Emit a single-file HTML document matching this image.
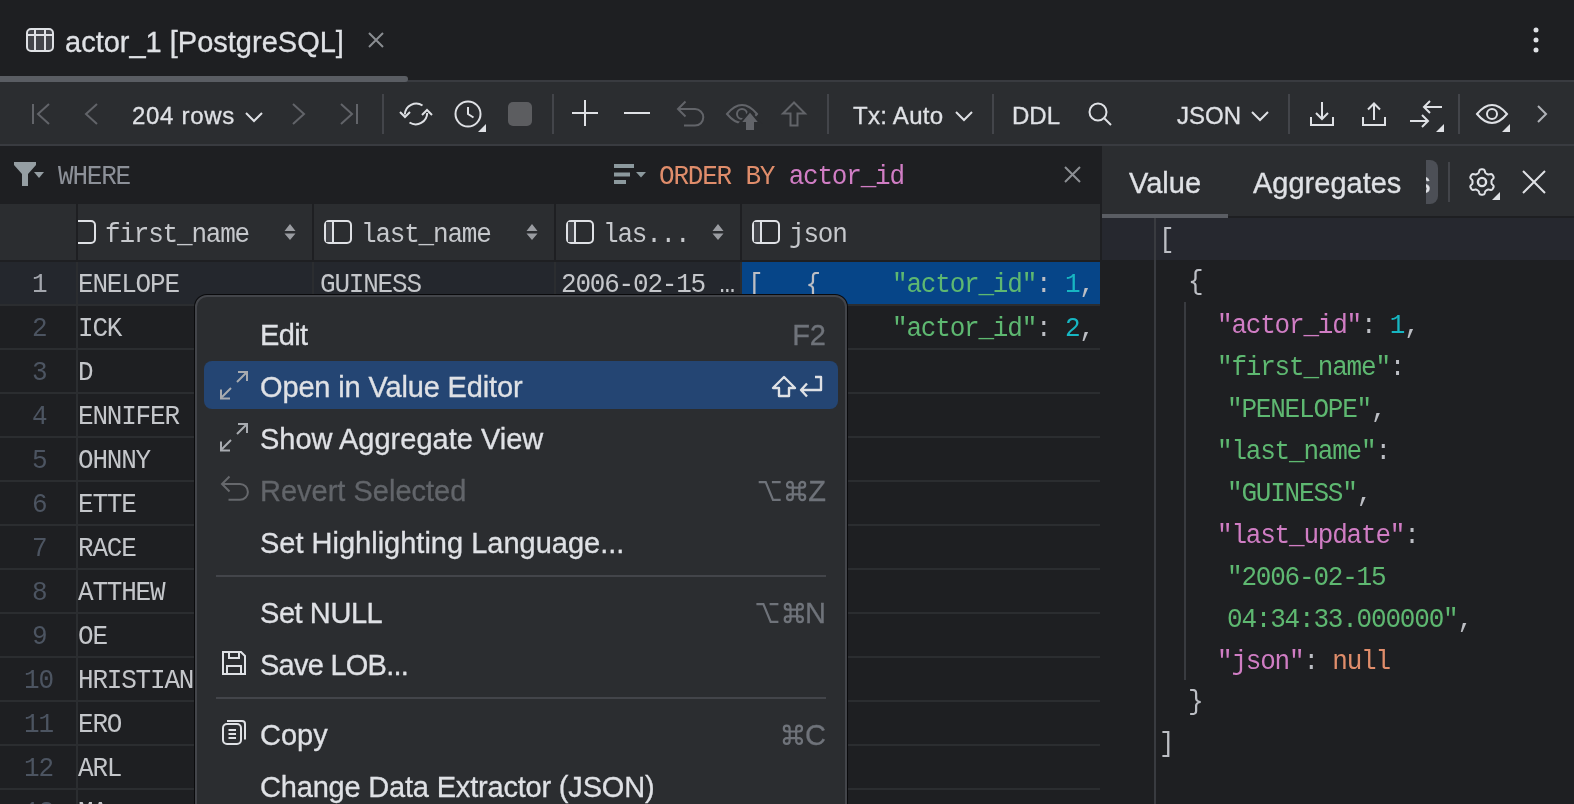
<!DOCTYPE html>
<html><head><meta charset="utf-8"><style>
html,body{margin:0;padding:0;width:1574px;height:804px;overflow:hidden;background:#1E1F22}
body>*{position:absolute}
.t{white-space:pre;line-height:0;height:0;-webkit-text-stroke:0.3px;will-change:transform}
</style></head><body>
<div style="left:0px;top:0px;width:1574px;height:80px;background:#1E1F22;"></div>
<div class="t" style="left:65px;top:25.75px;font:29px 'Liberation Sans', sans-serif;color:#DFE1E5;">actor_1 [PostgreSQL]</div>
<div style="left:0px;top:80px;width:1574px;height:2px;background:#393B40;"></div>
<div style="left:0px;top:76px;width:408px;height:6px;background:#5A5D63;border-radius:0 3px 3px 0"></div>
<div style="left:0px;top:82px;width:1574px;height:62px;background:#2B2D30;"></div>
<div style="left:0px;top:144px;width:1574px;height:2px;background:#393B40;"></div>
<div class="t" style="left:132px;top:102.27px;font:24px 'Liberation Sans', sans-serif;color:#DFE1E5;letter-spacing:0.7px">204 rows</div>
<div class="t" style="left:852.5px;top:101.77px;font:24px 'Liberation Sans', sans-serif;color:#DFE1E5;letter-spacing:0.3px">Tx: Auto</div>
<div class="t" style="left:1012px;top:101.77px;font:24px 'Liberation Sans', sans-serif;color:#DFE1E5;">DDL</div>
<div class="t" style="left:1176.5px;top:101.77px;font:24px 'Liberation Sans', sans-serif;color:#DFE1E5;">JSON</div>
<div style="left:0px;top:146px;width:1100px;height:58px;background:#1E1F22;"></div>
<div class="t" style="left:58px;top:162.35px;font:26px 'Liberation Mono', monospace;color:#8C9098;-webkit-text-stroke:0px;transform:scaleY(1.06);transform-origin:0 21.64px;letter-spacing:-1.2px">WHERE</div>
<div class="t" style="left:659px;top:162.35px;font:26px 'Liberation Mono', monospace;color:#E08D6B;-webkit-text-stroke:0px;transform:scaleY(1.06);transform-origin:0 21.64px;letter-spacing:-1.2px"><span style="color:#E08D6B">ORDER BY</span> <span style="color:#D07DC4">actor_id</span></div>
<div style="left:1100px;top:146px;width:2px;height:658px;background:#1E1F22;"></div>
<div style="left:0px;top:204px;width:1100px;height:56px;background:#2B2D30;"></div>
<div style="left:0px;top:260px;width:1100px;height:2px;background:#1E1F22;"></div>
<div style="left:76px;top:204px;width:2px;height:56px;background:#1E1F22;"></div>
<div style="left:312px;top:204px;width:2px;height:56px;background:#1E1F22;"></div>
<div style="left:554px;top:204px;width:2px;height:56px;background:#1E1F22;"></div>
<div style="left:740px;top:204px;width:2px;height:56px;background:#1E1F22;"></div>
<div class="t" style="left:105px;top:220.35px;font:26px 'Liberation Mono', monospace;color:#C6C8CC;-webkit-text-stroke:0px;transform:scaleY(1.06);transform-origin:0 21.64px;letter-spacing:-1.2px">first_name</div>
<div class="t" style="left:361px;top:220.35px;font:26px 'Liberation Mono', monospace;color:#C6C8CC;-webkit-text-stroke:0px;transform:scaleY(1.06);transform-origin:0 21.64px;letter-spacing:-1.2px">last_name</div>
<div class="t" style="left:603px;top:220.35px;font:26px 'Liberation Mono', monospace;color:#C6C8CC;-webkit-text-stroke:0px;transform:scaleY(1.06);transform-origin:0 21.64px;letter-spacing:-1.2px">las...</div>
<div class="t" style="left:789px;top:220.35px;font:26px 'Liberation Mono', monospace;color:#C6C8CC;-webkit-text-stroke:0px;transform:scaleY(1.06);transform-origin:0 21.64px;letter-spacing:-1.2px">json</div>
<div style="left:0px;top:262px;width:1100px;height:42px;background:#24272D;"></div>
<div style="left:0px;top:304px;width:1100px;height:2px;background:#2B2D30;"></div>
<div style="left:76px;top:262px;width:2px;height:44px;background:#2B2D30;"></div>
<div style="left:742px;top:262px;width:358px;height:42px;background:#064588;"></div>
<div class="t" style="left:32px;top:270.36px;font:26px 'Liberation Mono', monospace;color:#A3A6AD;-webkit-text-stroke:0px;transform:scaleY(1.06);transform-origin:0 21.64px;letter-spacing:-1.2px">1</div>
<div class="t" style="left:78px;top:270.36px;font:26px 'Liberation Mono', monospace;color:#C4C6CA;-webkit-text-stroke:0px;transform:scaleY(1.06);transform-origin:0 21.64px;letter-spacing:-1.2px">ENELOPE</div>
<div class="t" style="left:320px;top:270.36px;font:26px 'Liberation Mono', monospace;color:#C4C6CA;-webkit-text-stroke:0px;transform:scaleY(1.06);transform-origin:0 21.64px;letter-spacing:-1.2px">GUINESS</div>
<div class="t" style="left:561px;top:270.36px;font:26px 'Liberation Mono', monospace;color:#C4C6CA;-webkit-text-stroke:0px;transform:scaleY(1.06);transform-origin:0 21.64px;letter-spacing:-1.2px">2006-02-15 …</div>
<div class="t" style="left:747.5px;top:270.36px;font:26px 'Liberation Mono', monospace;color:#BCBEC4;-webkit-text-stroke:0px;transform:scaleY(1.06);transform-origin:0 21.64px;letter-spacing:-1.2px"><span style="color:#BCBEC4">[   {     </span><span style="color:#5EB871">"actor_id"</span><span style="color:#BCBEC4">: </span><span style="color:#17B6C2">1</span><span style="color:#BCBEC4">,</span></div>
<div style="left:312px;top:262px;width:2px;height:44px;background:#2B2D30;"></div>
<div style="left:554px;top:262px;width:2px;height:44px;background:#2B2D30;"></div>
<div style="left:740px;top:262px;width:2px;height:44px;background:#2B2D30;"></div>
<div style="left:0px;top:306px;width:1100px;height:42px;background:#1E1F22;"></div>
<div style="left:0px;top:348px;width:1100px;height:2px;background:#2B2D30;"></div>
<div style="left:76px;top:306px;width:2px;height:44px;background:#2B2D30;"></div>
<div class="t" style="left:32px;top:314.36px;font:26px 'Liberation Mono', monospace;color:#4C5461;-webkit-text-stroke:0px;transform:scaleY(1.06);transform-origin:0 21.64px;letter-spacing:-1.2px">2</div>
<div class="t" style="left:78px;top:314.36px;font:26px 'Liberation Mono', monospace;color:#C4C6CA;-webkit-text-stroke:0px;transform:scaleY(1.06);transform-origin:0 21.64px;letter-spacing:-1.2px">ICK</div>
<div class="t" style="left:747.5px;top:314.36px;font:26px 'Liberation Mono', monospace;color:#BCBEC4;-webkit-text-stroke:0px;transform:scaleY(1.06);transform-origin:0 21.64px;letter-spacing:-1.2px"><span style="color:#BCBEC4">[   {     </span><span style="color:#5EB871">"actor_id"</span><span style="color:#BCBEC4">: </span><span style="color:#17B6C2">2</span><span style="color:#BCBEC4">,</span></div>
<div style="left:312px;top:306px;width:2px;height:44px;background:#2B2D30;"></div>
<div style="left:554px;top:306px;width:2px;height:44px;background:#2B2D30;"></div>
<div style="left:740px;top:306px;width:2px;height:44px;background:#2B2D30;"></div>
<div style="left:0px;top:350px;width:1100px;height:42px;background:#1E1F22;"></div>
<div style="left:0px;top:392px;width:1100px;height:2px;background:#2B2D30;"></div>
<div style="left:76px;top:350px;width:2px;height:44px;background:#2B2D30;"></div>
<div class="t" style="left:32px;top:358.36px;font:26px 'Liberation Mono', monospace;color:#4C5461;-webkit-text-stroke:0px;transform:scaleY(1.06);transform-origin:0 21.64px;letter-spacing:-1.2px">3</div>
<div class="t" style="left:78px;top:358.36px;font:26px 'Liberation Mono', monospace;color:#C4C6CA;-webkit-text-stroke:0px;transform:scaleY(1.06);transform-origin:0 21.64px;letter-spacing:-1.2px">D</div>
<div style="left:312px;top:350px;width:2px;height:44px;background:#2B2D30;"></div>
<div style="left:554px;top:350px;width:2px;height:44px;background:#2B2D30;"></div>
<div style="left:740px;top:350px;width:2px;height:44px;background:#2B2D30;"></div>
<div style="left:0px;top:394px;width:1100px;height:42px;background:#1E1F22;"></div>
<div style="left:0px;top:436px;width:1100px;height:2px;background:#2B2D30;"></div>
<div style="left:76px;top:394px;width:2px;height:44px;background:#2B2D30;"></div>
<div class="t" style="left:32px;top:402.36px;font:26px 'Liberation Mono', monospace;color:#4C5461;-webkit-text-stroke:0px;transform:scaleY(1.06);transform-origin:0 21.64px;letter-spacing:-1.2px">4</div>
<div class="t" style="left:78px;top:402.36px;font:26px 'Liberation Mono', monospace;color:#C4C6CA;-webkit-text-stroke:0px;transform:scaleY(1.06);transform-origin:0 21.64px;letter-spacing:-1.2px">ENNIFER</div>
<div style="left:312px;top:394px;width:2px;height:44px;background:#2B2D30;"></div>
<div style="left:554px;top:394px;width:2px;height:44px;background:#2B2D30;"></div>
<div style="left:740px;top:394px;width:2px;height:44px;background:#2B2D30;"></div>
<div style="left:0px;top:438px;width:1100px;height:42px;background:#1E1F22;"></div>
<div style="left:0px;top:480px;width:1100px;height:2px;background:#2B2D30;"></div>
<div style="left:76px;top:438px;width:2px;height:44px;background:#2B2D30;"></div>
<div class="t" style="left:32px;top:446.36px;font:26px 'Liberation Mono', monospace;color:#4C5461;-webkit-text-stroke:0px;transform:scaleY(1.06);transform-origin:0 21.64px;letter-spacing:-1.2px">5</div>
<div class="t" style="left:78px;top:446.36px;font:26px 'Liberation Mono', monospace;color:#C4C6CA;-webkit-text-stroke:0px;transform:scaleY(1.06);transform-origin:0 21.64px;letter-spacing:-1.2px">OHNNY</div>
<div style="left:312px;top:438px;width:2px;height:44px;background:#2B2D30;"></div>
<div style="left:554px;top:438px;width:2px;height:44px;background:#2B2D30;"></div>
<div style="left:740px;top:438px;width:2px;height:44px;background:#2B2D30;"></div>
<div style="left:0px;top:482px;width:1100px;height:42px;background:#1E1F22;"></div>
<div style="left:0px;top:524px;width:1100px;height:2px;background:#2B2D30;"></div>
<div style="left:76px;top:482px;width:2px;height:44px;background:#2B2D30;"></div>
<div class="t" style="left:32px;top:490.36px;font:26px 'Liberation Mono', monospace;color:#4C5461;-webkit-text-stroke:0px;transform:scaleY(1.06);transform-origin:0 21.64px;letter-spacing:-1.2px">6</div>
<div class="t" style="left:78px;top:490.36px;font:26px 'Liberation Mono', monospace;color:#C4C6CA;-webkit-text-stroke:0px;transform:scaleY(1.06);transform-origin:0 21.64px;letter-spacing:-1.2px">ETTE</div>
<div style="left:312px;top:482px;width:2px;height:44px;background:#2B2D30;"></div>
<div style="left:554px;top:482px;width:2px;height:44px;background:#2B2D30;"></div>
<div style="left:740px;top:482px;width:2px;height:44px;background:#2B2D30;"></div>
<div style="left:0px;top:526px;width:1100px;height:42px;background:#1E1F22;"></div>
<div style="left:0px;top:568px;width:1100px;height:2px;background:#2B2D30;"></div>
<div style="left:76px;top:526px;width:2px;height:44px;background:#2B2D30;"></div>
<div class="t" style="left:32px;top:534.36px;font:26px 'Liberation Mono', monospace;color:#4C5461;-webkit-text-stroke:0px;transform:scaleY(1.06);transform-origin:0 21.64px;letter-spacing:-1.2px">7</div>
<div class="t" style="left:78px;top:534.36px;font:26px 'Liberation Mono', monospace;color:#C4C6CA;-webkit-text-stroke:0px;transform:scaleY(1.06);transform-origin:0 21.64px;letter-spacing:-1.2px">RACE</div>
<div style="left:312px;top:526px;width:2px;height:44px;background:#2B2D30;"></div>
<div style="left:554px;top:526px;width:2px;height:44px;background:#2B2D30;"></div>
<div style="left:740px;top:526px;width:2px;height:44px;background:#2B2D30;"></div>
<div style="left:0px;top:570px;width:1100px;height:42px;background:#1E1F22;"></div>
<div style="left:0px;top:612px;width:1100px;height:2px;background:#2B2D30;"></div>
<div style="left:76px;top:570px;width:2px;height:44px;background:#2B2D30;"></div>
<div class="t" style="left:32px;top:578.36px;font:26px 'Liberation Mono', monospace;color:#4C5461;-webkit-text-stroke:0px;transform:scaleY(1.06);transform-origin:0 21.64px;letter-spacing:-1.2px">8</div>
<div class="t" style="left:78px;top:578.36px;font:26px 'Liberation Mono', monospace;color:#C4C6CA;-webkit-text-stroke:0px;transform:scaleY(1.06);transform-origin:0 21.64px;letter-spacing:-1.2px">ATTHEW</div>
<div style="left:312px;top:570px;width:2px;height:44px;background:#2B2D30;"></div>
<div style="left:554px;top:570px;width:2px;height:44px;background:#2B2D30;"></div>
<div style="left:740px;top:570px;width:2px;height:44px;background:#2B2D30;"></div>
<div style="left:0px;top:614px;width:1100px;height:42px;background:#1E1F22;"></div>
<div style="left:0px;top:656px;width:1100px;height:2px;background:#2B2D30;"></div>
<div style="left:76px;top:614px;width:2px;height:44px;background:#2B2D30;"></div>
<div class="t" style="left:32px;top:622.36px;font:26px 'Liberation Mono', monospace;color:#4C5461;-webkit-text-stroke:0px;transform:scaleY(1.06);transform-origin:0 21.64px;letter-spacing:-1.2px">9</div>
<div class="t" style="left:78px;top:622.36px;font:26px 'Liberation Mono', monospace;color:#C4C6CA;-webkit-text-stroke:0px;transform:scaleY(1.06);transform-origin:0 21.64px;letter-spacing:-1.2px">OE</div>
<div style="left:312px;top:614px;width:2px;height:44px;background:#2B2D30;"></div>
<div style="left:554px;top:614px;width:2px;height:44px;background:#2B2D30;"></div>
<div style="left:740px;top:614px;width:2px;height:44px;background:#2B2D30;"></div>
<div style="left:0px;top:658px;width:1100px;height:42px;background:#1E1F22;"></div>
<div style="left:0px;top:700px;width:1100px;height:2px;background:#2B2D30;"></div>
<div style="left:76px;top:658px;width:2px;height:44px;background:#2B2D30;"></div>
<div class="t" style="left:24px;top:666.36px;font:26px 'Liberation Mono', monospace;color:#4C5461;-webkit-text-stroke:0px;transform:scaleY(1.06);transform-origin:0 21.64px;letter-spacing:-1.2px">10</div>
<div class="t" style="left:78px;top:666.36px;font:26px 'Liberation Mono', monospace;color:#C4C6CA;-webkit-text-stroke:0px;transform:scaleY(1.06);transform-origin:0 21.64px;letter-spacing:-1.2px">HRISTIAN</div>
<div style="left:312px;top:658px;width:2px;height:44px;background:#2B2D30;"></div>
<div style="left:554px;top:658px;width:2px;height:44px;background:#2B2D30;"></div>
<div style="left:740px;top:658px;width:2px;height:44px;background:#2B2D30;"></div>
<div style="left:0px;top:702px;width:1100px;height:42px;background:#1E1F22;"></div>
<div style="left:0px;top:744px;width:1100px;height:2px;background:#2B2D30;"></div>
<div style="left:76px;top:702px;width:2px;height:44px;background:#2B2D30;"></div>
<div class="t" style="left:24px;top:710.36px;font:26px 'Liberation Mono', monospace;color:#4C5461;-webkit-text-stroke:0px;transform:scaleY(1.06);transform-origin:0 21.64px;letter-spacing:-1.2px">11</div>
<div class="t" style="left:78px;top:710.36px;font:26px 'Liberation Mono', monospace;color:#C4C6CA;-webkit-text-stroke:0px;transform:scaleY(1.06);transform-origin:0 21.64px;letter-spacing:-1.2px">ERO</div>
<div style="left:312px;top:702px;width:2px;height:44px;background:#2B2D30;"></div>
<div style="left:554px;top:702px;width:2px;height:44px;background:#2B2D30;"></div>
<div style="left:740px;top:702px;width:2px;height:44px;background:#2B2D30;"></div>
<div style="left:0px;top:746px;width:1100px;height:42px;background:#1E1F22;"></div>
<div style="left:0px;top:788px;width:1100px;height:2px;background:#2B2D30;"></div>
<div style="left:76px;top:746px;width:2px;height:44px;background:#2B2D30;"></div>
<div class="t" style="left:24px;top:754.36px;font:26px 'Liberation Mono', monospace;color:#4C5461;-webkit-text-stroke:0px;transform:scaleY(1.06);transform-origin:0 21.64px;letter-spacing:-1.2px">12</div>
<div class="t" style="left:78px;top:754.36px;font:26px 'Liberation Mono', monospace;color:#C4C6CA;-webkit-text-stroke:0px;transform:scaleY(1.06);transform-origin:0 21.64px;letter-spacing:-1.2px">ARL</div>
<div style="left:312px;top:746px;width:2px;height:44px;background:#2B2D30;"></div>
<div style="left:554px;top:746px;width:2px;height:44px;background:#2B2D30;"></div>
<div style="left:740px;top:746px;width:2px;height:44px;background:#2B2D30;"></div>
<div style="left:0px;top:790px;width:1100px;height:42px;background:#1E1F22;"></div>
<div style="left:0px;top:832px;width:1100px;height:2px;background:#2B2D30;"></div>
<div style="left:76px;top:790px;width:2px;height:44px;background:#2B2D30;"></div>
<div class="t" style="left:24px;top:798.36px;font:26px 'Liberation Mono', monospace;color:#4C5461;-webkit-text-stroke:0px;transform:scaleY(1.06);transform-origin:0 21.64px;letter-spacing:-1.2px">13</div>
<div class="t" style="left:78px;top:798.36px;font:26px 'Liberation Mono', monospace;color:#C4C6CA;-webkit-text-stroke:0px;transform:scaleY(1.06);transform-origin:0 21.64px;letter-spacing:-1.2px">MA</div>
<div style="left:312px;top:790px;width:2px;height:44px;background:#2B2D30;"></div>
<div style="left:554px;top:790px;width:2px;height:44px;background:#2B2D30;"></div>
<div style="left:740px;top:790px;width:2px;height:44px;background:#2B2D30;"></div>
<div style="left:1102px;top:146px;width:472px;height:70px;background:#2B2D30;"></div>
<div style="left:1102px;top:216px;width:472px;height:2px;background:#1E1F22;"></div>
<div style="left:1102px;top:214px;width:126px;height:4px;background:#5A5D63;"></div>
<div class="t" style="left:1128.5px;top:167.25px;font:29px 'Liberation Sans', sans-serif;color:#DFE1E5;">Value</div>
<div class="t" style="left:1253px;top:167.25px;font:29px 'Liberation Sans', sans-serif;color:#DFE1E5;">Aggregates</div>
<div style="left:1426px;top:160px;width:12px;height:44px;background:#4C4F56;border-radius:0 8px 8px 0;overflow:hidden"><div class="t" style="left:-10px;top:7.25px;position:absolute;font:29px 'Liberation Sans', sans-serif;color:#DFE1E5">s</div></div>
<div style="left:1102px;top:218px;width:472px;height:586px;background:#1E1F22;"></div>
<div style="left:1102px;top:218px;width:472px;height:42px;background:#26282F;"></div>
<div style="left:1154px;top:218px;width:2px;height:586px;background:#393B40;"></div>
<div style="left:1184px;top:302px;width:2px;height:378px;background:#393B40;"></div>
<div class="t" style="left:1159px;top:224.85px;font:26px 'Liberation Mono', monospace;color:#BCBEC4;-webkit-text-stroke:0px;transform:scaleY(1.06);transform-origin:0 21.64px;letter-spacing:-1.2px"><span style="color:#BCBEC4">[</span></div>
<div class="t" style="left:1188px;top:266.86px;font:26px 'Liberation Mono', monospace;color:#BCBEC4;-webkit-text-stroke:0px;transform:scaleY(1.06);transform-origin:0 21.64px;letter-spacing:-1.2px"><span style="color:#BCBEC4">{</span></div>
<div class="t" style="left:1217px;top:310.86px;font:26px 'Liberation Mono', monospace;color:#BCBEC4;-webkit-text-stroke:0px;transform:scaleY(1.06);transform-origin:0 21.64px;letter-spacing:-1.2px"><span style="color:#D07DC4">"actor_id"</span><span style="color:#BCBEC4">: </span><span style="color:#17B6C2">1</span><span style="color:#BCBEC4">,</span></div>
<div class="t" style="left:1217px;top:352.86px;font:26px 'Liberation Mono', monospace;color:#BCBEC4;-webkit-text-stroke:0px;transform:scaleY(1.06);transform-origin:0 21.64px;letter-spacing:-1.2px"><span style="color:#5EB871">"first_name"</span><span style="color:#BCBEC4">:</span></div>
<div class="t" style="left:1227px;top:394.86px;font:26px 'Liberation Mono', monospace;color:#BCBEC4;-webkit-text-stroke:0px;transform:scaleY(1.06);transform-origin:0 21.64px;letter-spacing:-1.2px"><span style="color:#5EB871">"PENELOPE"</span><span style="color:#BCBEC4">,</span></div>
<div class="t" style="left:1217px;top:436.86px;font:26px 'Liberation Mono', monospace;color:#BCBEC4;-webkit-text-stroke:0px;transform:scaleY(1.06);transform-origin:0 21.64px;letter-spacing:-1.2px"><span style="color:#5EB871">"last_name"</span><span style="color:#BCBEC4">:</span></div>
<div class="t" style="left:1227px;top:478.86px;font:26px 'Liberation Mono', monospace;color:#BCBEC4;-webkit-text-stroke:0px;transform:scaleY(1.06);transform-origin:0 21.64px;letter-spacing:-1.2px"><span style="color:#5EB871">"GUINESS"</span><span style="color:#BCBEC4">,</span></div>
<div class="t" style="left:1217px;top:520.86px;font:26px 'Liberation Mono', monospace;color:#BCBEC4;-webkit-text-stroke:0px;transform:scaleY(1.06);transform-origin:0 21.64px;letter-spacing:-1.2px"><span style="color:#D07DC4">"last_update"</span><span style="color:#BCBEC4">:</span></div>
<div class="t" style="left:1227px;top:562.86px;font:26px 'Liberation Mono', monospace;color:#BCBEC4;-webkit-text-stroke:0px;transform:scaleY(1.06);transform-origin:0 21.64px;letter-spacing:-1.2px"><span style="color:#5EB871">"2006-02-15</span></div>
<div class="t" style="left:1227px;top:604.86px;font:26px 'Liberation Mono', monospace;color:#BCBEC4;-webkit-text-stroke:0px;transform:scaleY(1.06);transform-origin:0 21.64px;letter-spacing:-1.2px"><span style="color:#5EB871">04:34:33.000000"</span><span style="color:#BCBEC4">,</span></div>
<div class="t" style="left:1217px;top:646.86px;font:26px 'Liberation Mono', monospace;color:#BCBEC4;-webkit-text-stroke:0px;transform:scaleY(1.06);transform-origin:0 21.64px;letter-spacing:-1.2px"><span style="color:#D07DC4">"json"</span><span style="color:#BCBEC4">: </span><span style="color:#E08D6B">null</span></div>
<div class="t" style="left:1188px;top:686.86px;font:26px 'Liberation Mono', monospace;color:#BCBEC4;-webkit-text-stroke:0px;transform:scaleY(1.06);transform-origin:0 21.64px;letter-spacing:-1.2px"><span style="color:#BCBEC4">}</span></div>
<div class="t" style="left:1159px;top:728.86px;font:26px 'Liberation Mono', monospace;color:#BCBEC4;-webkit-text-stroke:0px;transform:scaleY(1.06);transform-origin:0 21.64px;letter-spacing:-1.2px"><span style="color:#BCBEC4">]</span></div>
<svg style="left:0;top:0" width="1574" height="804"><rect x="27" y="29" width="26" height="22" rx="4" fill="#43454A" stroke="#DFE1E5" stroke-width="2"/><path d="M27 35H53M35 29V51M45 29V51" stroke="#DFE1E5" stroke-width="2"/><path d="M369 33L383 47M383 33L369 47" stroke="#8A8D92" stroke-width="2"/><circle cx="1536" cy="30" r="2.5" fill="#DFE1E5"/><circle cx="1536" cy="40" r="2.5" fill="#DFE1E5"/><circle cx="1536" cy="50" r="2.5" fill="#DFE1E5"/><line x1="33" y1="104" x2="33" y2="124" stroke="#626469" stroke-width="2"/><polyline points="49,104 38,114 49,124" fill="none" stroke="#626469" stroke-width="2"/><polyline points="97,104 86,114 97,124" fill="none" stroke="#626469" stroke-width="2"/><polyline points="246,113 254,121 262,113" fill="none" stroke="#DFE1E5" stroke-width="2"/><polyline points="293,104 304,114 293,124" fill="none" stroke="#626469" stroke-width="2"/><polyline points="341,104 352,114 341,124" fill="none" stroke="#626469" stroke-width="2"/><line x1="357" y1="104" x2="357" y2="124" stroke="#626469" stroke-width="2"/><line x1="383" y1="94" x2="383" y2="134" stroke="#43454A" stroke-width="2"/><line x1="553" y1="94" x2="553" y2="134" stroke="#43454A" stroke-width="2"/><line x1="828" y1="94" x2="828" y2="134" stroke="#43454A" stroke-width="2"/><line x1="993" y1="94" x2="993" y2="134" stroke="#43454A" stroke-width="2"/><line x1="1289" y1="94" x2="1289" y2="134" stroke="#43454A" stroke-width="2"/><line x1="1459" y1="94" x2="1459" y2="134" stroke="#43454A" stroke-width="2"/><path d="M422.5 105.5 A11.5 11.5 0 0 0 404.8 114.5" fill="none" stroke="#DFE1E5" stroke-width="2"/><polyline points="400,112 405,117 410,112" fill="none" stroke="#DFE1E5" stroke-width="2"/><path d="M409.5 122.5 A11.5 11.5 0 0 0 427.2 113" fill="none" stroke="#DFE1E5" stroke-width="2"/><polyline points="422,115 427,110 432,115" fill="none" stroke="#DFE1E5" stroke-width="2"/><circle cx="468" cy="114" r="12.5" fill="none" stroke="#DFE1E5" stroke-width="2"/><polyline points="468,107 468,114 473.5,117.5" fill="none" stroke="#DFE1E5" stroke-width="2"/><path d="M478 132 L486 132 L486 124 Z" fill="#DFE1E5"/><rect x="508" y="102" width="24" height="24" rx="5" fill="#5C5D60"/><path d="M572 113H598M585 100V126" stroke="#DFE1E5" stroke-width="2"/><path d="M624 113H650" stroke="#DFE1E5" stroke-width="2"/><polyline points="685.5,101.5 678,109 685.5,116.5" fill="none" stroke="#626469" stroke-width="2"/><path d="M678 109H695 A8.3 8.3 0 0 1 695 125.6H684" fill="none" stroke="#626469" stroke-width="2"/><path d="M727 114 Q742 96 757 114 Q742 132 727 114Z" fill="none" stroke="#626469" stroke-width="2"/><circle cx="742" cy="114" r="5" fill="none" stroke="#626469" stroke-width="2"/><path d="M750 111 L760 123 L755 123 L755 131 L745 131 L745 123 L740 123Z" fill="#626469" stroke="#2B2D30" stroke-width="2"/><path d="M794 102.5 L783 113.5 L790.5 113.5 L790.5 125.5 L797.5 125.5 L797.5 113.5 L805 113.5Z" fill="none" stroke="#626469" stroke-width="2"/><polyline points="956,112 964,120 972,112" fill="none" stroke="#DFE1E5" stroke-width="2"/><circle cx="1098" cy="112" r="8.5" fill="none" stroke="#DFE1E5" stroke-width="2"/><path d="M1104.5 118.5L1111 125" stroke="#DFE1E5" stroke-width="2"/><polyline points="1252,112 1260,120 1268,112" fill="none" stroke="#DFE1E5" stroke-width="2"/><path d="M1322 102V119M1316 113L1322 119L1328 113M1311 117V125H1333V117" fill="none" stroke="#DFE1E5" stroke-width="2"/><path d="M1374 103.5V120M1368 109.5L1374 103.5L1380 109.5M1363 117V125H1385V117" fill="none" stroke="#DFE1E5" stroke-width="2"/><path d="M1442 107H1424M1430 101L1424 107L1430 113M1410 121H1428M1422 115L1428 121L1422 127" fill="none" stroke="#DFE1E5" stroke-width="2"/><path d="M1436 132H1444V124Z" fill="#DFE1E5"/><path d="M1477 114 Q1492 96 1507 114 Q1492 132 1477 114Z" fill="none" stroke="#DFE1E5" stroke-width="2"/><circle cx="1492" cy="114" r="5" fill="none" stroke="#DFE1E5" stroke-width="2"/><path d="M1502 132H1510V124Z" fill="#DFE1E5"/><polyline points="1538,106 1546,114 1538,122" fill="none" stroke="#B0B3B8" stroke-width="2"/><path d="M14 162H36V165L28 174V186H22V174L14 165Z" fill="#959EA3"/><path d="M34 172H44L39 178Z" fill="#959EA3"/><rect x="614" y="164" width="20" height="4" fill="#8C999E"/><rect x="614" y="172.5" width="16" height="4" fill="#8C999E"/><rect x="614" y="180" width="12" height="4" fill="#8C999E"/><path d="M636 172H646L641 177.5Z" fill="#8C999E"/><path d="M1065 167L1080 182M1080 167L1065 182" stroke="#8C8F94" stroke-width="2"/><path d="M78 221H91A4 4 0 0 1 95 225V239A4 4 0 0 1 91 243H78" fill="none" stroke="#DFE1E5" stroke-width="2"/><rect x="325" y="221" width="26" height="22" rx="4" fill="none" stroke="#DFE1E5" stroke-width="2"/><rect x="326" y="222" width="7" height="20" fill="#43454A"/><path d="M333 221V243" stroke="#DFE1E5" stroke-width="2"/><rect x="567" y="221" width="26" height="22" rx="4" fill="none" stroke="#DFE1E5" stroke-width="2"/><rect x="568" y="222" width="7" height="20" fill="#43454A"/><path d="M575 221V243" stroke="#DFE1E5" stroke-width="2"/><rect x="753" y="221" width="26" height="22" rx="4" fill="none" stroke="#DFE1E5" stroke-width="2"/><rect x="754" y="222" width="7" height="20" fill="#43454A"/><path d="M761 221V243" stroke="#DFE1E5" stroke-width="2"/><path d="M284.5 231H295.5L290.0 224Z M284.5 233.5H295.5L290.0 240Z" fill="#9A9CA1"/><path d="M526.5 231H537.5L532.0 224Z M526.5 233.5H537.5L532.0 240Z" fill="#9A9CA1"/><path d="M712.5 231H723.5L718.0 224Z M712.5 233.5H723.5L718.0 240Z" fill="#9A9CA1"/><line x1="1449" y1="162" x2="1449" y2="202" stroke="#43454A" stroke-width="2"/><path d="M1491.50 182.00 L1491.50 181.50 L1491.50 181.00 L1491.57 180.48 L1491.91 179.89 L1492.72 179.13 L1493.48 178.27 L1493.68 177.52 L1493.56 176.86 L1493.31 176.24 L1493.00 175.65 L1492.64 175.09 L1492.23 174.57 L1491.72 174.13 L1490.97 173.92 L1489.85 174.15 L1488.78 174.47 L1488.10 174.47 L1487.61 174.27 L1487.18 174.02 L1486.75 173.77 L1486.32 173.53 L1485.88 173.27 L1485.47 172.95 L1485.13 172.37 L1484.87 171.28 L1484.51 170.19 L1483.96 169.64 L1483.32 169.42 L1482.66 169.33 L1482.00 169.30 L1481.34 169.33 L1480.68 169.42 L1480.04 169.64 L1479.49 170.19 L1479.13 171.28 L1478.87 172.37 L1478.53 172.95 L1478.12 173.27 L1477.68 173.53 L1477.25 173.77 L1476.82 174.02 L1476.39 174.27 L1475.90 174.47 L1475.22 174.47 L1474.15 174.15 L1473.03 173.92 L1472.28 174.13 L1471.77 174.57 L1471.36 175.09 L1471.00 175.65 L1470.69 176.24 L1470.44 176.86 L1470.32 177.52 L1470.52 178.27 L1471.28 179.13 L1472.09 179.89 L1472.43 180.48 L1472.50 181.00 L1472.50 181.50 L1472.50 182.00 L1472.50 182.50 L1472.50 183.00 L1472.43 183.52 L1472.09 184.11 L1471.28 184.87 L1470.52 185.73 L1470.32 186.48 L1470.44 187.14 L1470.69 187.76 L1471.00 188.35 L1471.36 188.91 L1471.77 189.43 L1472.28 189.87 L1473.03 190.08 L1474.15 189.85 L1475.22 189.53 L1475.90 189.53 L1476.39 189.73 L1476.82 189.98 L1477.25 190.23 L1477.68 190.47 L1478.12 190.73 L1478.53 191.05 L1478.87 191.63 L1479.13 192.72 L1479.49 193.81 L1480.04 194.36 L1480.68 194.58 L1481.34 194.67 L1482.00 194.70 L1482.66 194.67 L1483.32 194.58 L1483.96 194.36 L1484.51 193.81 L1484.87 192.72 L1485.13 191.63 L1485.47 191.05 L1485.88 190.73 L1486.32 190.47 L1486.75 190.23 L1487.18 189.98 L1487.61 189.73 L1488.10 189.53 L1488.78 189.53 L1489.85 189.85 L1490.97 190.08 L1491.72 189.87 L1492.23 189.43 L1492.64 188.91 L1493.00 188.35 L1493.31 187.76 L1493.56 187.14 L1493.68 186.48 L1493.48 185.73 L1492.72 184.87 L1491.91 184.11 L1491.57 183.52 L1491.50 183.00 L1491.50 182.50Z" fill="none" stroke="#DFE1E5" stroke-width="2"/><circle cx="1482" cy="182" r="4.1" fill="none" stroke="#DFE1E5" stroke-width="2.4"/><path d="M1492 200H1500V192Z" fill="#DFE1E5"/><path d="M1523 171L1545 193M1545 171L1523 193" stroke="#DFE1E5" stroke-width="2"/></svg>
<div style="left:195px;top:295px;width:648px;height:530px;background:#2B2D30;border:2px solid #43454A;border-radius:12px;box-shadow:0 0 0 1px #0A0A0C"></div>
<div style="left:204px;top:361px;width:634px;height:48px;background:#244573;border-radius:8px"></div>
<div class="t" style="left:260px;top:318.75px;font:29px 'Liberation Sans', sans-serif;color:#DFE1E5;letter-spacing:-0.6px">Edit</div>
<div class="t" style="left:600px;width:226px;text-align:right;top:318.75px;font:29px 'Liberation Sans', sans-serif;color:#6F737A">F2</div>
<div class="t" style="left:260px;top:370.75px;font:29px 'Liberation Sans', sans-serif;color:#DFE1E5;letter-spacing:-0.15px">Open in Value Editor</div>
<div class="t" style="left:260px;top:422.75px;font:29px 'Liberation Sans', sans-serif;color:#DFE1E5;letter-spacing:0px">Show Aggregate View</div>
<div class="t" style="left:260px;top:474.75px;font:29px 'Liberation Sans', sans-serif;color:#62656A;letter-spacing:0px">Revert Selected</div>
<div class="t" style="left:600px;width:226px;text-align:right;top:474.75px;font:29px 'Liberation Sans', sans-serif;color:#6F737A">Z</div>
<div class="t" style="left:260px;top:526.75px;font:29px 'Liberation Sans', sans-serif;color:#DFE1E5;letter-spacing:0px">Set Highlighting Language...</div>
<div class="t" style="left:260px;top:596.75px;font:29px 'Liberation Sans', sans-serif;color:#DFE1E5;letter-spacing:-0.43px">Set NULL</div>
<div class="t" style="left:600px;width:226px;text-align:right;top:596.75px;font:29px 'Liberation Sans', sans-serif;color:#6F737A">N</div>
<div class="t" style="left:260px;top:648.75px;font:29px 'Liberation Sans', sans-serif;color:#DFE1E5;letter-spacing:-0.75px">Save LOB...</div>
<div class="t" style="left:260px;top:718.75px;font:29px 'Liberation Sans', sans-serif;color:#DFE1E5;letter-spacing:0px">Copy</div>
<div class="t" style="left:600px;width:226px;text-align:right;top:718.75px;font:29px 'Liberation Sans', sans-serif;color:#6F737A">C</div>
<div class="t" style="left:260px;top:770.75px;font:29px 'Liberation Sans', sans-serif;color:#DFE1E5;letter-spacing:-0.19px">Change Data Extractor (JSON)</div>
<div style="left:216px;top:575px;width:610px;height:2px;background:#43454A;"></div>
<div style="left:216px;top:697px;width:610px;height:2px;background:#43454A;"></div>
<svg style="left:0;top:0" width="1574" height="804"><path d="M231 388L222 397M221 389.5V398.5H230M237 382L246 373M238 372H247V381" fill="none" stroke="#A8ABB0" stroke-width="2"/><path d="M231 440L222 449M221 441.5V450.5H230M237 434L246 425M238 424H247V433" fill="none" stroke="#A8ABB0" stroke-width="2"/><polyline points="229.5,476.5 222,484 229.5,491.5" fill="none" stroke="#66686C" stroke-width="2"/><path d="M222 484H240A7.9 7.9 0 0 1 240 499.8H228.5" fill="none" stroke="#66686C" stroke-width="2"/><path d="M223 652H241L245 656V674H223Z M229 652V658H239V652 M227 674V666H241V674" fill="none" stroke="#DFE1E5" stroke-width="2" stroke-linejoin="miter"/><rect x="223" y="724" width="18" height="20" rx="4" fill="none" stroke="#DFE1E5" stroke-width="2"/><path d="M227 721H242A3 3 0 0 1 245 724V739.5" fill="none" stroke="#DFE1E5" stroke-width="2"/><path d="M228.5 730H236M228.5 734H236M228.5 738H236" stroke="#DFE1E5" stroke-width="2"/><path d="M784 377L773 388H779V396H789V388H795Z" fill="none" stroke="#DFE1E5" stroke-width="2.4" stroke-linejoin="round"/><path d="M815 377H821V390H801M807 383.5L801 390L807 396.5" fill="none" stroke="#DFE1E5" stroke-width="2.4" stroke-linejoin="round"/><path d="M758.70 482.10H765.70L773.00 499.90H780.70M771.90 482.10H780.70" fill="none" stroke="#6F737A" stroke-width="2.2"/><path d="M792.80 494.30V484.80A2.9 2.9 0 1 0 789.90 487.70H802.30A2.9 2.9 0 1 0 799.40 484.80V497.20A2.9 2.9 0 1 0 802.30 494.30H789.90A2.9 2.9 0 1 0 792.80 497.20Z" fill="none" stroke="#6F737A" stroke-width="2.2"/><path d="M756.40 604.10H763.40L770.70 621.90H778.40M769.60 604.10H778.40" fill="none" stroke="#6F737A" stroke-width="2.2"/><path d="M790.50 616.30V606.80A2.9 2.9 0 1 0 787.60 609.70H800.00A2.9 2.9 0 1 0 797.10 606.80V619.20A2.9 2.9 0 1 0 800.00 616.30H787.60A2.9 2.9 0 1 0 790.50 619.20Z" fill="none" stroke="#6F737A" stroke-width="2.2"/><path d="M789.60 738.10V728.60A2.9 2.9 0 1 0 786.70 731.50H799.10A2.9 2.9 0 1 0 796.20 728.60V741.00A2.9 2.9 0 1 0 799.10 738.10H786.70A2.9 2.9 0 1 0 789.60 741.00Z" fill="none" stroke="#6F737A" stroke-width="2.2"/></svg>
</body></html>
